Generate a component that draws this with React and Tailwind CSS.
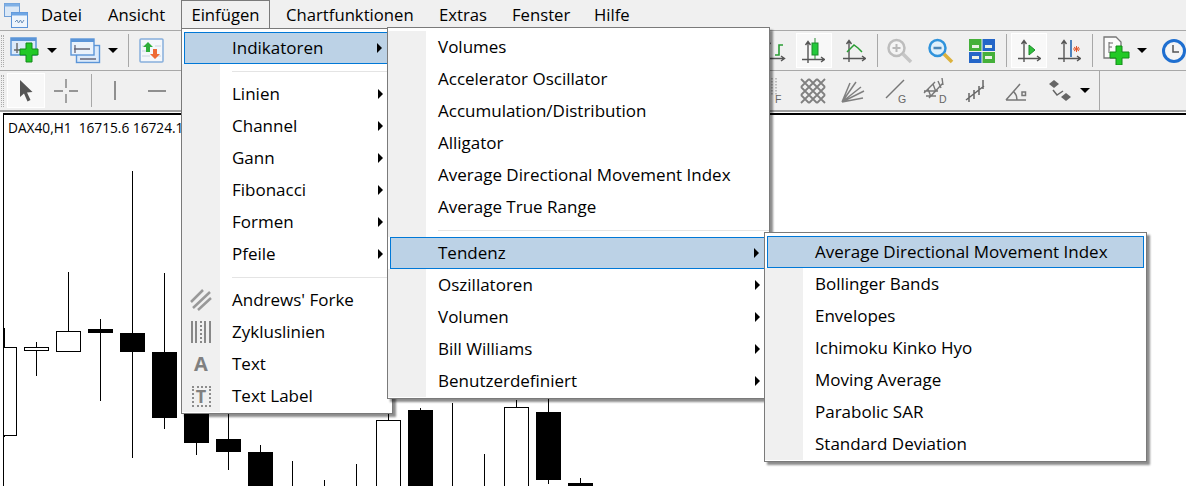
import React from 'react';

const candles = [
  { x: 4, top: 328, bottom: 437, y: 347, h: 88, x0: 3, w: 13, fill: 'white' },
  { x: 36, top: 342, bottom: 376, y: 347, h: 3 },
  { x: 68, top: 272, bottom: 335, y: 331, h: 20 },
  { x: 100, top: 319, bottom: 401, y: 329, h: 3, dark: true },
  { x: 132, top: 171, bottom: 458, y: 333, h: 18, dark: true },
  { x: 164, top: 273, bottom: 429, y: 352, h: 65, dark: true },
  { x: 196, top: 400, bottom: 455, y: 400, h: 42, dark: true },
  { x: 228, top: 400, bottom: 470, y: 439, h: 12, dark: true },
  { x: 260, top: 445, bottom: 486, y: 452, h: 40, dark: true },
  { x: 292, top: 461, bottom: 486 },
  { x: 324, top: 480, bottom: 486 },
  { x: 356, top: 464, bottom: 486 },
  { x: 388, top: 400, bottom: 486, y: 420, h: 70 },
  { x: 420, top: 408, bottom: 486, y: 410, h: 80, dark: true },
  { x: 452, top: 403, bottom: 486 },
  { x: 484, top: 454, bottom: 486 },
  { x: 516, top: 400, bottom: 486, y: 407, h: 85 },
  { x: 548, top: 399, bottom: 484, y: 412, h: 67, dark: true },
  { x: 580, top: 478, bottom: 486, y: 483, h: 8, dark: true },
];

const insertItems = [
  { label: 'Indikatoren', arrow: true, active: true },
  { sep: true },
  { label: 'Linien', arrow: true },
  { label: 'Channel', arrow: true },
  { label: 'Gann', arrow: true },
  { label: 'Fibonacci', arrow: true },
  { label: 'Formen', arrow: true },
  { label: 'Pfeile', arrow: true },
  { sep: true },
  { label: "Andrews' Forke", icon: <PitchforkIcon /> },
  { label: 'Zykluslinien', icon: <CycleIcon /> },
  { label: 'Text', icon: <span className="text-[20px] font-bold leading-none text-[#808080]">A</span> },
  {
    label: 'Text Label',
    icon: (
      <span className="flex h-[21px] w-[19px] items-center justify-center border-2 border-dotted border-[#8c8c8c] text-[18px] font-bold leading-none text-[#808080]">
        T
      </span>
    ),
  },
];

const indicatorItems = [
  { label: 'Volumes' },
  { label: 'Accelerator Oscillator' },
  { label: 'Accumulation/Distribution' },
  { label: 'Alligator' },
  { label: 'Average Directional Movement Index' },
  { label: 'Average True Range' },
  { sep: true },
  { label: 'Tendenz', arrow: true, active: true },
  { label: 'Oszillatoren', arrow: true },
  { label: 'Volumen', arrow: true },
  { label: 'Bill Williams', arrow: true },
  { label: 'Benutzerdefiniert', arrow: true },
];

const trendItems = [
  { label: 'Average Directional Movement Index', active: true },
  { label: 'Bollinger Bands' },
  { label: 'Envelopes' },
  { label: 'Ichimoku Kinko Hyo' },
  { label: 'Moving Average' },
  { label: 'Parabolic SAR' },
  { label: 'Standard Deviation' },
];

function PitchforkIcon() {
  return (
    <svg width="22" height="22" viewBox="0 0 22 22" fill="none" stroke="#999" strokeWidth="2.500">
      <path d="M1 13 13 1M3 19 20 3M8 21 21 9" />
    </svg>
  );
}

function CycleIcon() {
  return (
    <svg width="22" height="24" viewBox="0 0 22 24" fill="none" stroke="#888" strokeWidth="2">
      <path d="M2 1v22M6 1v22M20 1v22M15 1v22" />
      <path d="M11 1v22" strokeDasharray="2 2" />
    </svg>
  );
}

function Axes({ color = '#555' }) {
  return (
    <path
      d="M6 2v21M3.500 5 6 1.500 8.500 5M0 19.500h22M19 17l3.500 2.500L19 22"
      fill="none"
      stroke={color}
      strokeWidth="1.400"
    />
  );
}

function Drop() {
  return <span className="h-0 w-0 border-x-[5px] border-t-[5px] border-x-transparent border-t-black" />;
}

function Sep({ className }) {
  return <span className={`w-px self-stretch bg-[#a8a8a8] my-[3px] ${className}`} />;
}

function Grip() {
  return <span className="ml-px h-[32px] w-[3px] border-x border-dotted border-[#aaa]" />;
}

function PressedButton({ className, children }) {
  return (
    <span className={`flex h-[35px] w-[38px] items-center justify-center border border-white bg-[#f8f8f8] ${className}`}>
      {children}
    </span>
  );
}

function Menu({ className, items }) {
  return (
    <div className={`absolute border border-[#7a7a7a] bg-white pb-px pt-[3px] shadow-[3px_3px_2px_rgba(0,0,0,0.45)] ${className}`}>
      {items.map((item, i) => {
        if (item.sep) {
          return (
            <div key={i} className="flex h-[14px]">
              <div className="w-[38px] bg-[#f0f0f0]" />
              <div className="ml-[12px] mt-[7px] h-px flex-1 bg-[#e4e4e4]" />
            </div>
          );
        }
        return (
          <div
            key={i}
            className={
              item.active
                ? 'mx-[2px] flex h-[32px] items-center border border-[#0078d7] bg-[#bcd2e6] pl-[47px] pr-[7px]'
                : 'flex h-[32px] items-center pr-[9px]'
            }
          >
            {!item.active && (
              <div className="mr-[12px] flex h-full w-[38px] items-center justify-center bg-[#f0f0f0]">{item.icon}</div>
            )}
            <span className="flex-1 whitespace-nowrap">{item.label}</span>
            {item.arrow && <span className="h-0 w-0 border-y-[5px] border-l-[5px] border-y-transparent border-l-black" />}
          </div>
        );
      })}
    </div>
  );
}

export default function App() {
  return (
    <div className="relative flex h-[486px] w-[1186px] flex-col overflow-hidden bg-[#f0f0f0] font-['Open_Sans',sans-serif] text-[17px] text-black">
      {/* menu bar */}
      <div className="flex h-[30px] shrink-0 items-center text-[16.7px]">
        <svg className="ml-[4px]" width="25" height="25" viewBox="0 0 25 25" fill="none">
          <rect x="0.500" y="0.500" width="15" height="13" fill="#dbe8f6" stroke="#6f9ed6" />
          <rect x="0.500" y="0.500" width="15" height="3" fill="#7fb0e6" />
          <rect x="7.500" y="9.500" width="16" height="15" fill="#eef5fc" stroke="#5a93d8" />
          <rect x="7.500" y="9.500" width="16" height="3" fill="#6ea6e4" />
          <path d="M11 19l2-2 1.500 3 2-3 1.500 3 2-3" stroke="#6b8fb8" />
        </svg>
        <span className="ml-[12px] w-[40px]">Datei</span>
        <span className="ml-[27px] w-[57px]">Ansicht</span>
        <span className="ml-[16px] flex h-[28px] w-[89px] items-center justify-center self-start border border-b-0 border-[#7a7a7a]">Einfügen</span>
        <span className="ml-[16px] w-[127px]">Chartfunktionen</span>
        <span className="ml-[26px] w-[47px]">Extras</span>
        <span className="ml-[26px] w-[56px]">Fenster</span>
        <span className="ml-[26px]">Hilfe</span>
      </div>

      {/* main toolbar */}
      <div className="flex h-[40px] shrink-0 items-center border-t border-[#a8a8a8]">
        <Grip />
        <svg className="ml-[6px] shrink-0" width="31" height="27" viewBox="0 0 31 27">
          <rect x="1" y="1" width="25" height="17" fill="#dceafa" stroke="#5b95d8" strokeWidth="1.500" />
          <rect x="1" y="1" width="25" height="3" fill="#5b95d8" />
          <path d="M7 6v10M4 13h16" stroke="#666" fill="none" strokeWidth="1.400" />
          <path d="M16 6h6v6h6v6h-6v7h-6v-7H10v-6h6z" fill="#22c926" stroke="#138a18" />
        </svg>
        <span className="ml-[6px] flex w-[10px] justify-center"><Drop /></span>
        <svg className="ml-[13px] shrink-0" width="31" height="26" viewBox="0 0 31 26" fill="none">
          <rect x="6.500" y="7.500" width="23" height="17" fill="#dceafa" stroke="#5b95d8" strokeWidth="1.400" />
          <rect x="1" y="1" width="23" height="16" fill="#eaf2fb" stroke="#5b95d8" strokeWidth="1.400" />
          <rect x="1" y="1" width="23" height="3" fill="#5b95d8" />
          <path d="M5 7v8M4 11h16M10 21h16" stroke="#667" strokeWidth="1.300" />
        </svg>
        <span className="ml-[7px] flex w-[10px] justify-center"><Drop /></span>
        <Sep className="ml-[10px]" />
        <svg className="ml-[10px] shrink-0" width="25" height="25" viewBox="0 0 25 25" fill="none">
          <rect x="1" y="1" width="23" height="23" rx="1" fill="#f4f7fb" stroke="#86aedb" strokeWidth="1.500" />
          <path d="M3 8h7v-.1M15 18h7M3 13h6M3 18h8M16 8h6" stroke="#c8d4e0" />
          <path d="M9 4 14 9h-3v5H7V9H4z" fill="#2eae3a" />
          <path d="M16 21l-5-5h3v-5h4v5h3z" fill="#ee6a35" />
        </svg>

        <svg className="ml-[598px] shrink-0" width="24" height="24" viewBox="0 0 24 24">
          <Axes />
          <path d="M13 16h4V6h4" fill="none" stroke="#2a9d34" strokeWidth="1.600" />
        </svg>
        <PressedButton className="ml-[10px]">
          <svg width="23" height="26" viewBox="0 0 23 26">
            <g transform="translate(0 2)"><Axes /></g>
            <path d="M13 0v21" stroke="#2a8d34" />
            <rect x="10" y="5" width="6" height="12" fill="#23c93a" stroke="#1c8a2a" />
          </svg>
        </PressedButton>
        <svg className="ml-[11px] shrink-0" width="23" height="24" viewBox="0 0 23 24">
          <Axes />
          <path d="M4 13 11 6l4 3 4 4" fill="none" stroke="#2a9d34" strokeWidth="1.500" />
        </svg>
        <Sep className="ml-[11px]" />
        <svg className="ml-[8px] shrink-0" width="27" height="26" viewBox="0 0 27 26" fill="none">
          <circle cx="10.500" cy="10" r="8" fill="#f4f4f4" stroke="#bdbdbd" strokeWidth="2.500" />
          <path d="M10.500 6v8M6.500 10h8" stroke="#b8b8b8" strokeWidth="2" />
          <path d="M17 16l8 8" stroke="#c6c6c6" strokeWidth="3.500" />
        </svg>
        <svg className="ml-[14px] shrink-0" width="27" height="26" viewBox="0 0 27 26" fill="none">
          <circle cx="10.500" cy="10" r="8" fill="#dff0fb" stroke="#2f93dc" strokeWidth="2.500" />
          <path d="M6.500 10h8" stroke="#4b86b5" strokeWidth="2.500" />
          <path d="M17 16l8 8" stroke="#dcb23c" strokeWidth="3.500" />
        </svg>
        <svg className="ml-[15px] shrink-0" width="26" height="26" viewBox="0 0 26 26">
          <rect x="0" y="1" width="12.500" height="12" fill="#45b03a" />
          <rect x="13.500" y="1" width="12.500" height="12" fill="#2466c8" />
          <rect x="0" y="14" width="12.500" height="11" fill="#2466c8" />
          <rect x="13.500" y="14" width="12.500" height="11" fill="#45b03a" />
          <path d="M3 7h7v3H3zM16 7h7v3h-7zM3 18h7v3H3zM16 18h7v3h-7z" fill="#e9f2e6" />
        </svg>
        <Sep className="ml-[11px]" />
        <PressedButton className="ml-[4px]">
          <svg width="23" height="24" viewBox="0 0 23 24">
            <Axes />
            <path d="M11 6l6 5-6 5z" fill="#30c03c" stroke="#1c8a2a" />
          </svg>
        </PressedButton>
        <svg className="ml-[11px] shrink-0" width="23" height="24" viewBox="0 0 23 24">
          <Axes />
          <path d="M13 1v17" stroke="#2468b0" strokeWidth="1.600" />
          <path d="M15 10h7M18.500 7v6M16 8l5 4M21 8l-5 4" stroke="#e2562a" />
        </svg>
        <Sep className="ml-[11px]" />
        <svg className="ml-[10px] shrink-0" width="27" height="29" viewBox="0 0 27 29" fill="none">
          <path d="M1 1h12l5 5v16H1z" fill="#fbfbfb" stroke="#777" strokeWidth="1.300" />
          <path d="M6 6v11M6 7h4M6 11h3" stroke="#666" />
          <path d="M13 10h6v6h7v6h-7v7h-6v-7H7v-6h6z" fill="#22c926" stroke="#138a18" />
        </svg>
        <span className="ml-[7px] flex w-[10px] justify-center"><Drop /></span>
        <svg className="ml-[15px] shrink-0" width="24" height="24" viewBox="0 0 24 24" fill="none">
          <circle cx="12" cy="12" r="10.500" fill="#f5f5f5" stroke="#1f6fd0" strokeWidth="3" />
          <path d="M11 6v7h6" stroke="#555" strokeWidth="1.500" />
        </svg>
      </div>

      {/* line studies toolbar */}
      <div className="flex h-[40px] shrink-0 items-center border-t border-[#a8a8a8]">
        <Grip />
        <PressedButton className="ml-[3px]">
          <svg width="16" height="24" viewBox="0 0 16 24">
            <path d="M2 1v17l4-3.500 3.500 8 3-1.500-3.500-7.500 5.500-.5z" fill="#555" />
          </svg>
        </PressedButton>
        <svg className="ml-[9px] shrink-0" width="24" height="24" viewBox="0 0 24 24" fill="none" stroke="#777" strokeWidth="1.300">
          <path d="M12 0v9M12 15v9M0 12h9M15 12h9" />
        </svg>
        <Sep className="ml-[13px]" />
        <svg className="ml-[16px] shrink-0" width="14" height="22" viewBox="0 0 14 22" stroke="#777" strokeWidth="1.600">
          <path d="M7 1v19" />
        </svg>
        <svg className="ml-[24px] shrink-0" width="22" height="4" viewBox="0 0 22 4" stroke="#777" strokeWidth="1.600">
          <path d="M2 2h18" />
        </svg>

        <svg className="ml-[602px] shrink-0" width="14" height="26" viewBox="0 0 14 26">
          <path d="M2 0v17M6 0v17" stroke="#888" strokeDasharray="1.500 1.500" />
          <text x="5" y="25" fontSize="10.500" fill="#666" fontFamily="Liberation Sans">F</text>
        </svg>
        <svg className="ml-[16px] shrink-0" width="26" height="26" viewBox="0 0 26 26" fill="none" stroke="#808080" strokeWidth="1.800">
          <path d="M1 1 25 25M1 9 17 25M9 1l16 16M1 17l8 8M17 1l8 8M25 1 1 25M25 9 9 25M17 1 1 17M25 17l-8 8M9 1 1 9" />
        </svg>
        <svg className="ml-[15px] shrink-0" width="24" height="24" viewBox="0 0 24 24" fill="none" stroke="#808080" strokeWidth="1.500">
          <path d="M1 23 9 4M1 23 15 3M1 23 20 8M1 23 23 12M1 23 22 19" />
        </svg>
        <svg className="ml-[20px] shrink-0" width="23" height="26" viewBox="0 0 23 26" fill="none">
          <path d="M1 20 19 2" stroke="#777" strokeWidth="1.500" />
          <text x="13" y="25" fontSize="10.500" fill="#666" fontFamily="Liberation Sans">G</text>
        </svg>
        <svg className="ml-[15px] shrink-0" width="24" height="26" viewBox="0 0 24 26" fill="none">
          <path d="M1 15 12 4M6 20 20 5M1 13h14M3 18h10M5 11l3 8M10 6l3 8M15 3l3 7M19 0l1 7" stroke="#777" strokeWidth="1.400" />
          <text x="16" y="25" fontSize="10.500" fill="#666" fontFamily="Liberation Sans">D</text>
        </svg>
        <svg className="ml-[18px] shrink-0" width="22" height="24" viewBox="0 0 22 24" fill="none" stroke="#666" strokeWidth="1.500">
          <path d="M1 21 19 7M4 14v9M9 11v9M14 7v9M18 1v9" />
        </svg>
        <svg className="ml-[18px] shrink-0" width="24" height="22" viewBox="0 0 24 22" fill="none" stroke="#777" strokeWidth="1.500">
          <path d="M1 20h20M1 20 15 4M9 12q3 3 3 8" />
          <rect x="17" y="12" width="3.500" height="3.500" />
        </svg>
        <svg className="ml-[19px] shrink-0" width="24" height="24" viewBox="0 0 24 24">
          <path d="M6 1l5 4-5 4-5-4zM18 14l5 4-5 4-5-4z" fill="#666" />
          <path d="M5 11l4 5 6-4" fill="none" stroke="#666" strokeWidth="1.500" />
        </svg>
        <span className="ml-[8px] flex w-[10px] justify-center"><Drop /></span>
        <span className="ml-[9px] w-px self-stretch bg-[#a8a8a8]" />
      </div>

      {/* chart */}
      <div className="flex min-h-0 flex-1 flex-col border-t-2 border-[#a0a0a0] bg-white pl-[3px] pt-px">
        <div className="relative flex-1 border-l border-t-2 border-black">
          <svg className="absolute left-[-4px] top-[-2px]" width="1186" height="373" viewBox="0 113 1186 373">
            {candles.map((c, i) => (
              <g key={i}>
                <rect x={c.x} y={c.top} width="1" height={c.bottom - c.top} fill="black" />
                {c.y && (
                  <rect
                    x={(c.x0 ?? c.x - 12) + 0.5}
                    y={c.y + 0.5}
                    width={c.w ?? 24}
                    height={c.h}
                    fill={c.dark ? 'black' : 'white'}
                    stroke="black"
                  />
                )}
              </g>
            ))}
          </svg>
          <span className="absolute left-[4px] top-[3px] whitespace-pre text-[13.7px] text-black">DAX40,H1  16715.6 16724.1</span>
        </div>
      </div>

      <Menu className="left-[181px] top-[28px] w-[212px]" items={insertItems} />
      <Menu className="left-[387px] top-[27px] w-[383px]" items={indicatorItems} />
      <Menu className="left-[764px] top-[232px] w-[383px]" items={trendItems} />
    </div>
  );
}
